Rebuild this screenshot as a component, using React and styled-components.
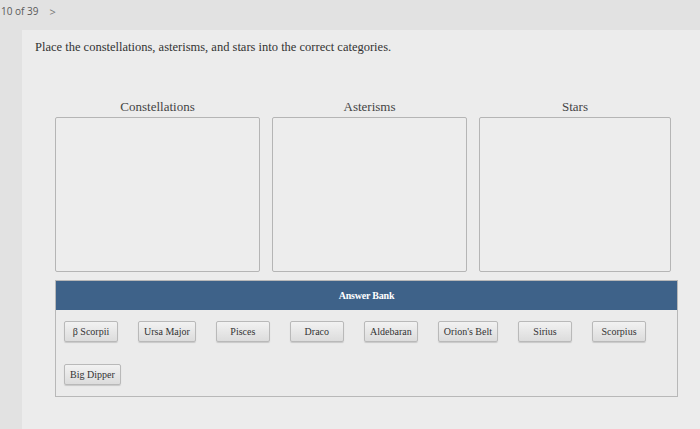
import React from "react";
import styled, { createGlobalStyle } from "styled-components";

const Global = createGlobalStyle`
  html, body {
    margin: 0;
    padding: 0;
    background: #e2e2e2;
  }
`;

const Page = styled.div`
  width: 700px;
  height: 429px;
  overflow: hidden;
  display: flex;
  flex-direction: column;
`;

const TopBar = styled.div`
  height: 30px;
  display: flex;
  align-items: center;
  padding-bottom: 8px;
  box-sizing: border-box;
  font-family: "Open Sans", "Liberation Sans", sans-serif;
  font-size: 10px;
  color: #5a5a5a;
`;

const Count = styled.span`
  margin-left: 1px;
`;

const Chevron = styled.span`
  margin-left: 11px;
  font-size: 11px;
  color: #777;
`;

const Panel = styled.div`
  flex: 1;
  margin-left: 22px;
  background: #ececec;
  padding: 9px 0 0 13px;
  font-family: "Liberation Serif", serif;
  color: #333;
`;

const Question = styled.div`
  font-size: 12.5px;
  line-height: 16px;
`;

const Categories = styled.div`
  display: grid;
  grid-template-columns: 205px 195px 192px;
  column-gap: 12px;
  margin: 44px 0 0 20px;
`;

const Category = styled.div`
  display: flex;
  flex-direction: column;
  align-items: center;
`;

const Label = styled.div`
  font-size: 13px;
  color: #444;
  height: 16px;
  margin-bottom: 2px;
`;

const Drop = styled.div`
  width: 100%;
  height: 155px;
  box-sizing: border-box;
  border: 1.5px solid #b5b5b5;
  border-radius: 2px;
  background: #ededed;
`;

const Bank = styled.div`
  width: 623px;
  margin: 8px 0 0 20px;
  border: 1px solid #b8b8b8;
  box-sizing: border-box;
`;

const BankHead = styled.div`
  height: 29px;
  background: #3e6289;
  color: #fff;
  font-weight: bold;
  font-size: 10px;
  display: flex;
  align-items: center;
  justify-content: center;
  letter-spacing: -0.2px;
`;

const BankBody = styled.div`
  background: #ebebeb;
  padding: 11px 9px 11px 8px;
  display: flex;
  flex-wrap: wrap;
  column-gap: 20px;
  row-gap: 21px;
  min-height: 64px;
`;

const Chip = styled.div`
  min-width: 54px;
  height: 21px;
  padding: 0 5px;
  box-sizing: border-box;
  display: flex;
  align-items: center;
  justify-content: center;
  font-size: 10px;
  color: #333;
  background: linear-gradient(#f2f2f2, #dcdcdc);
  border: 1px solid #b9b9b9;
  border-radius: 2px;
  box-shadow: 0 1px 1px rgba(0, 0, 0, 0.15);
  white-space: nowrap;
`;

const categories = ["Constellations", "Asterisms", "Stars"];
const answers = [
  "β Scorpii",
  "Ursa Major",
  "Pisces",
  "Draco",
  "Aldebaran",
  "Orion's Belt",
  "Sirius",
  "Scorpius",
  "Big Dipper",
];

const App = () => (
  <Page>
    <Global />
    <TopBar>
      <Count>10 of 39</Count>
      <Chevron>&gt;</Chevron>
    </TopBar>
    <Panel>
      <Question>
        Place the constellations, asterisms, and stars into the correct
        categories.
      </Question>
      <Categories>
        {categories.map((c) => (
          <Category key={c}>
            <Label>{c}</Label>
            <Drop />
          </Category>
        ))}
      </Categories>
      <Bank>
        <BankHead>Answer Bank</BankHead>
        <BankBody>
          {answers.map((a) => (
            <Chip key={a}>{a}</Chip>
          ))}
        </BankBody>
      </Bank>
    </Panel>
  </Page>
);

export default App;
